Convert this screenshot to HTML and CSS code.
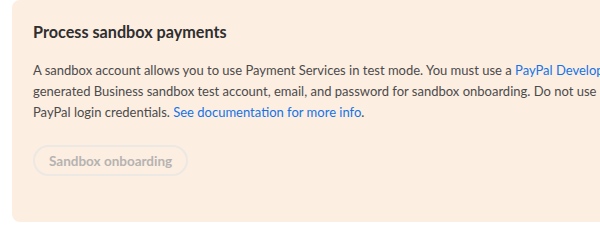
FILE: index.html
```html
<!DOCTYPE html>
<html>
<head>
<meta charset="utf-8">
<link rel="stylesheet" href="styles.css">
</head>
<body>
<section class="card">
  <h2 class="title">Process sandbox payments</h2>
  <p class="desc">A sandbox account allows you to use Payment Services in test mode. You must use a <a class="link" href="#">PayPal Developer-</a><br>generated Business sandbox test account, email, and password for sandbox onboarding. Do not use personal<br>PayPal login credentials. <a class="link" href="#">See documentation for more info</a>.</p>
  <button class="btn" disabled>Sandbox onboarding</button>
</section>
</body>
</html>
```
FILE: styles.css
```css
html, body {
  margin: 0;
  padding: 0;
  background: #ffffff;
  overflow: hidden;
}
body {
  width: 600px;
  height: 243px;
  font-family: "Lato", "Liberation Sans", sans-serif;
}
.card {
  margin-left: 12px;
  width: 760px;
  height: 222px;
  box-sizing: border-box;
  background: #fdeee2;
  border-radius: 8px;
  padding: 20px 21px 0;
}
.title {
  margin: 0;
  font-size: 16.2px;
  line-height: 24px;
  font-weight: 700;
  color: #2f2f2f;
}
.desc {
  margin: 16px 0 0;
  font-size: 13px;
  line-height: 21px;
  color: #4b4b4b;
  white-space: nowrap;
}
.link {
  color: #1473e6;
  text-decoration: none;
}
.btn {
  display: block;
  margin-top: 22px;
  height: 31px;
  padding: 0 14px;
  border: 2px solid #ece8e3;
  border-radius: 16px;
  background: transparent;
  font-family: inherit;
  font-size: 13.5px;
  font-weight: 700;
  color: #b5b3b1;
}
```
